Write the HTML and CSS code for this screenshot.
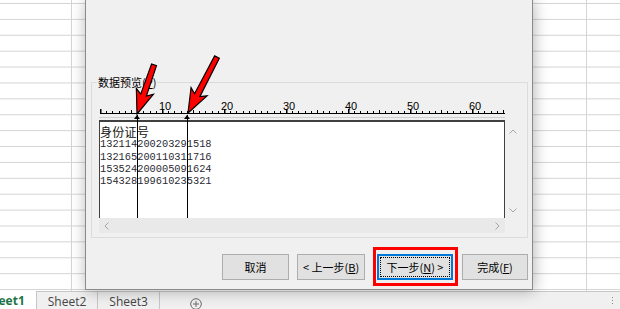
FILE: index.html
```html
<!DOCTYPE html>
<html lang="zh-CN">

<head>
  <meta charset="UTF-8">
  <title>文本分列向导</title>
  <link rel="stylesheet" href="styles.css">
</head>

<body>
  <div class="workbook">
    <div class="grid">
      <div class="col col-a"></div>
      <div class="col col-b"></div>
      <div class="col col-c"></div>
    </div>
    <div class="tab-bar">
      <div class="tab active">Sheet1</div>
      <div class="tab">Sheet2</div>
      <div class="tab">Sheet3</div>
      <div class="add-sheet">
        <svg width="12" height="12" viewBox="0 0 12 12">
          <circle cx="6" cy="6" r="5.3" fill="none" stroke="#6b6b6b" stroke-width="1"/>
          <path d="M6 3v6M3 6h6" stroke="#6b6b6b" stroke-width="1"/>
        </svg>
      </div>
      <div class="splitter"><span></span><span></span><span></span></div>
    </div>
  </div>

  <div class="dialog">
    <div class="group">
      <div class="group-label">数据预览(<u>P</u>)</div>
      <div class="preview">
        <svg class="ruler" width="422" height="21" viewBox="0 0 422 21">
          <defs>
            <pattern id="ticks" x="1" y="0" width="62" height="21" patternUnits="userSpaceOnUse">
              <rect x="0" y="10" width="1.5" height="4"/>
              <rect x="6" y="12" width="1" height="2"/>
              <rect x="12" y="12" width="1" height="2"/>
              <rect x="19" y="12" width="1" height="2"/>
              <rect x="25" y="12" width="1" height="2"/>
              <rect x="31" y="11" width="1" height="3"/>
              <rect x="37" y="12" width="1" height="2"/>
              <rect x="43" y="12" width="1" height="2"/>
              <rect x="50" y="12" width="1" height="2"/>
              <rect x="56" y="12" width="1" height="2"/>
            </pattern>
          </defs>
          <rect x="1" y="0" width="405" height="15" fill="url(#ticks)"/>
          <rect x="1" y="14" width="405" height="1" fill="#000"/>
          <rect x="0" y="18" width="406" height="1" fill="#cfcfcf"/>
          <g class="ruler-nums">
            <text x="60" y="11">10</text>
            <text x="122" y="11">20</text>
            <text x="184" y="11">30</text>
            <text x="246" y="11">40</text>
            <text x="308" y="11">50</text>
            <text x="370" y="11">60</text>
          </g>
        </svg>
        <div class="preview-grid">
          <div class="data">
            <div class="line head">身份证号</div>
            <div class="line">132114200203291518</div>
            <div class="line">132165200110311716</div>
            <div class="line">153524200005091624</div>
            <div class="line">154328199610235321</div>
          </div>
          <div class="vscroll">
            <svg width="8" height="5" viewBox="0 0 8 5"><path d="M0.5 4.5L4 1l3.5 3.5" fill="none" stroke="#a6a6a6"/></svg>
            <svg width="8" height="5" viewBox="0 0 8 5"><path d="M0.5 0.5L4 4l3.5-3.5" fill="none" stroke="#a6a6a6"/></svg>
          </div>
          <div class="hscroll">
            <svg width="5" height="8" viewBox="0 0 5 8"><path d="M4.5 0.5L1 4l3.5 3.5" fill="none" stroke="#a6a6a6"/></svg>
            <svg width="5" height="8" viewBox="0 0 5 8"><path d="M0.5 0.5L4 4L0.5 7.5" fill="none" stroke="#a6a6a6"/></svg>
          </div>
          <div class="corner"></div>
        </div>
        <div class="break" style="--col: 6"></div>
        <div class="break" style="--col: 14"></div>
      </div>
    </div>

    <div class="buttons">
      <button class="btn btn-cancel">取消</button>
      <button class="btn btn-back">&lt;&nbsp;上一步(<u>B</u>)</button>
      <button class="btn btn-next default">下一步(<u>N</u>)&nbsp;&gt;</button>
      <button class="btn btn-finish">完成(<u>F</u>)</button>
    </div>
  </div>

  <div class="highlight"></div>

  <svg class="arrows" width="620" height="309" viewBox="0 0 620 309">
    <polygon transform="translate(137 114) rotate(109.1)" points="0,0 -24,-9 -20,-3 -52,-2.6 -52,2.6 -20,3 -24,9"/>
    <polygon transform="translate(188 113) rotate(117.4)" points="0,0 -24,-9 -20,-3 -63,-2.6 -63,2.6 -20,3 -24,9"/>
  </svg>
</body>

</html>
```

FILE: styles.css
```css
* {
  margin: 0;
  padding: 0;
  box-sizing: border-box;
}

body {
  position: relative;
  width: 620px;
  height: 309px;
  overflow: hidden;
  background-color: #fff;
  font-family: 'Noto Sans CJK SC', 'Noto Sans', sans-serif;
}

/* spreadsheet behind the dialog */

.workbook {
  display: flex;
  flex-direction: column;
  height: 309px;
}

.grid {
  display: flex;
  height: 291px;
  background-image: linear-gradient(#d4d4d4 1px, transparent 1px);
  background-size: 100% 15.9px;
  background-position: 0 3px;
}

.col {
  border-right: 1px solid #d4d4d4;
}

.col-a {
  width: 72px;
}

.col-b {
  width: 515px;
}

.col-c {
  flex: 1;
  border-right: none;
}

.tab-bar {
  display: flex;
  height: 18px;
  background-color: #f0f0f0;
  border-top: 1px solid #c6c6c6;
  font-family: 'Open Sans', sans-serif;
  font-size: 12px;
  color: #444;
}

.tab {
  padding: 2px 11px 0;
  line-height: 16px;
  border-right: 1px solid #c6c6c6;
  white-space: nowrap;
}

.tab.active {
  margin-left: -27px;
  margin-top: -1px;
  background-color: #fff;
  color: #217346;
  font-weight: 700;
}

.add-sheet {
  margin-left: 30px;
  padding-top: 6px;
}

.add-sheet svg {
  display: block;
}

.splitter {
  margin-left: auto;
  margin-right: 7px;
  padding-top: 5px;
  display: flex;
  flex-direction: column;
  gap: 2px;
}

.splitter span {
  width: 1px;
  height: 1px;
  background-color: #8a8a8a;
}

/* wizard dialog */

.dialog {
  position: absolute;
  left: 85px;
  top: 0;
  width: 448px;
  height: 290px;
  padding-top: 82px;
  background-color: #f0f0f0;
  border: 1px solid #8a8a8a;
  border-top: none;
  box-shadow: 1px 1px 14px rgba(0, 0, 0, 0.3);
  display: flex;
  flex-direction: column;
  font-size: 11px;
  color: #000;
}

.group {
  position: relative;
  height: 156px;
  margin: 0 4px 0 5px;
  padding: 16px 6px 0 7px;
  border: 1px solid #dcdcdc;
}

.group-label {
  position: absolute;
  top: -8px;
  left: 5px;
  padding: 0 1px;
  line-height: 14px;
  background-color: #f0f0f0;
}

.preview {
  position: relative;
  width: 422px;
}

.ruler {
  display: block;
}

.ruler-nums {
  font-family: 'Liberation Sans', sans-serif;
  font-size: 11px;
  fill: #000;
}

.preview-grid {
  display: grid;
  grid-template-columns: 406px 16px;
  grid-template-rows: 98px 15px;
}

.data {
  background-color: #fff;
  border-top: 2px solid #404040;
  border-left: 1px solid #404040;
  border-right: 1px solid #404040;
  padding-top: 4px;
  font-family: 'Liberation Mono', monospace;
  font-size: 10.33px;
  color: #2b2b33;
}

.line {
  height: 12.3px;
  line-height: 12.3px;
  white-space: pre;
}

.line.head {
  font-family: 'Noto Sans CJK SC', sans-serif;
  font-size: 12px;
  letter-spacing: 0.3px;
  color: #111;
}

.vscroll {
  display: flex;
  flex-direction: column;
  justify-content: space-between;
  align-items: center;
  padding: 9px 0 5px;
}

.hscroll {
  display: flex;
  justify-content: space-between;
  align-items: center;
  padding: 0 5px;
  background-color: #e9e9e9;
}

.vscroll svg,
.hscroll svg {
  display: block;
}

.break {
  position: absolute;
  top: 16px;
  left: calc(1px + var(--col) * 6.2px);
  width: 1px;
  height: 103px;
  background-color: #000;
}

.break::before {
  content: '';
  position: absolute;
  top: 0;
  left: -3px;
  border-left: 3.5px solid transparent;
  border-right: 3.5px solid transparent;
  border-bottom: 4px solid #000;
}

.buttons {
  display: flex;
  justify-content: flex-end;
  margin-top: 16px;
  padding-right: 4px;
}

.btn {
  height: 26px;
  border: 1px solid #adadad;
  background-color: #e1e1e1;
  font-family: inherit;
  font-size: 11px;
  color: #000;
}

.btn-cancel {
  width: 67px;
}

.btn-back {
  width: 68px;
  margin-left: 8px;
}

.btn-next {
  width: 76px;
  margin-left: 12px;
}

.btn-finish {
  width: 66px;
  margin-left: 9px;
}

.btn.default {
  border-color: #0078d7;
  box-shadow: inset 0 0 0 1px #0078d7;
  outline: 1px dotted #000;
  outline-offset: -4px;
}

/* annotations */

.highlight {
  position: absolute;
  left: 373px;
  top: 247px;
  width: 85px;
  height: 39px;
  border: 3px solid #ff0000;
}

.arrows {
  position: absolute;
  left: 0;
  top: 0;
  pointer-events: none;
}

.arrows polygon {
  fill: #ff0000;
  stroke: #000;
  stroke-width: 1.2;
  stroke-linejoin: miter;
}
```
